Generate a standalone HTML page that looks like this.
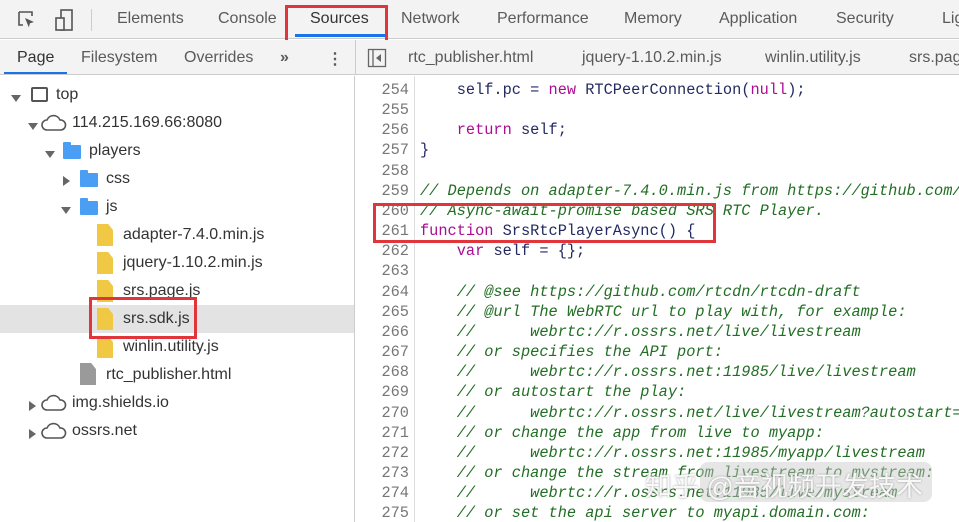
<!DOCTYPE html>
<html><head><meta charset="utf-8"><style>
*{margin:0;padding:0;box-sizing:border-box}
body{width:959px;height:522px;overflow:hidden;background:#fff;font-family:"Liberation Sans",sans-serif;position:relative;color:#333}
.abs{position:absolute;white-space:nowrap}
.tb{position:absolute;left:0;top:0;width:959px;height:39px;background:#f3f3f3;border-bottom:1px solid #ccc;overflow:hidden}
.tb span{position:absolute;top:10px;font-size:16px;color:#5a5a5a}
.row2{position:absolute;left:0;top:40px;width:959px;height:35px;background:#f3f3f3;border-bottom:1px solid #ccc;overflow:hidden}
.row2 span{position:absolute;top:9px;font-size:16px;color:#5a5a5a}
.left{position:absolute;left:0;top:76px;width:355px;height:446px;background:#fff;border-right:1px solid #ccc}
.t{position:absolute;font-size:16px;color:#333;white-space:nowrap}
.code{position:absolute;left:360px;top:80px;width:599px;height:442px;overflow:hidden;font-family:"Liberation Mono",monospace;font-size:15.3px;line-height:20.15px}
.ln{position:absolute;left:0;width:49px;text-align:right;color:#777}
.gut{position:absolute;left:414px;top:76px;width:1px;height:446px;background:#ddd}
.c{color:#236e25;font-style:italic}
.k{color:#aa0d91}
.n{color:#222a60}
.tri{display:inline-block;width:0;height:0;border-left:5px solid transparent;border-right:5px solid transparent;border-top:7px solid #666}
.trr{display:inline-block;width:0;height:0;border-top:5px solid transparent;border-bottom:5px solid transparent;border-left:7px solid #666}
.fold{position:absolute;width:18px;height:14px;background:#4a9ff5;border-radius:1px}
.fold:before{content:"";position:absolute;left:0;top:-3px;width:8px;height:4px;background:#4a9ff5;border-radius:1px 1px 0 0}
.file{position:absolute;width:16px;height:22px;background:#f0c844;clip-path:polygon(0 0,70% 0,100% 28%,100% 100%,0 100%)}
.red{position:absolute;border:3px solid #e0353b}
</style></head><body>
<div class="tb">
<svg class="abs" style="left:17px;top:10px" width="20" height="20" viewBox="0 0 20 20"><path d="M2 2h13v4M2 2v13h4" fill="none" stroke="#555" stroke-width="1.6"/><path d="M8 8l9 4-4 1.2-1.2 4z" fill="#555"/></svg>
<svg class="abs" style="left:54px;top:8px" width="20" height="24" viewBox="0 0 20 24"><rect x="7" y="2" width="11" height="20" fill="none" stroke="#555" stroke-width="1.6"/><rect x="2" y="10" width="8" height="12" fill="#f3f3f3" stroke="#555" stroke-width="1.6"/></svg>
<div class="abs" style="left:91px;top:9px;width:1px;height:22px;background:#ccc"></div>
<span style="left:117px">Elements</span>
<span style="left:218px">Console</span>
<span style="left:310px;color:#333">Sources</span>
<span style="left:401px">Network</span>
<span style="left:497px">Performance</span>
<span style="left:624px">Memory</span>
<span style="left:719px">Application</span>
<span style="left:836px">Security</span>
<span style="left:942px">Lig</span>
<div class="abs" style="left:295px;top:34px;width:90px;height:3px;background:#1a73e8"></div>
</div>
<div class="red" style="left:285px;top:5px;width:103px;height:39px"></div>
<div class="row2">
<span style="left:17px;color:#333">Page</span>
<span style="left:81px">Filesystem</span>
<span style="left:184px">Overrides</span>
<span style="left:280px;font-weight:bold">»</span>
<span style="left:327px;font-weight:bold">⋮</span>
<div class="abs" style="left:4px;top:32px;width:63px;height:3px;background:#1a73e8"></div>
<div class="abs" style="left:355px;top:0;width:1px;height:35px;background:#ccc"></div>
<svg class="abs" style="left:367px;top:8px" width="20" height="20" viewBox="0 0 20 20"><rect x="1.5" y="1.5" width="17" height="17" fill="none" stroke="#666" stroke-width="1.3"/><line x1="6" y1="2" x2="6" y2="18" stroke="#666" stroke-width="1.3"/><path d="M14 6v8l-5-4z" fill="#666"/></svg>
<span style="left:408px">rtc_publisher.html</span>
<span style="left:582px">jquery-1.10.2.min.js</span>
<span style="left:765px">winlin.utility.js</span>
<span style="left:909px">srs.pag</span>
</div>
<div class="left">
<div class="abs" style="left:0;top:229px;width:354px;height:28px;background:#e3e3e3"></div>
</div>
<!-- tree -->
<div class="abs" style="left:11px;top:89px"><span class="tri"></span></div>
<div class="abs" style="left:31px;top:87px;width:17px;height:15px;border:2px solid #555;border-radius:2px"></div>
<div class="t" style="left:56px;top:86px">top</div>
<div class="abs" style="left:28px;top:117px"><span class="tri"></span></div>
<svg class="abs" style="left:41px;top:114px" width="26" height="18" viewBox="0 0 26 18"><path d="M6 16a5 5 0 0 1 0-10a7 7 0 0 1 13 0a5 5 0 0 1 1 10z" fill="none" stroke="#555" stroke-width="1.6"/></svg>
<div class="t" style="left:72px;top:114px">114.215.169.66:8080</div>
<div class="abs" style="left:45px;top:145px"><span class="tri"></span></div>
<div class="fold" style="left:63px;top:145px"></div>
<div class="t" style="left:89px;top:142px">players</div>
<div class="abs" style="left:63px;top:173px"><span class="trr"></span></div>
<div class="fold" style="left:80px;top:173px"></div>
<div class="t" style="left:106px;top:170px">css</div>
<div class="abs" style="left:61px;top:201px"><span class="tri"></span></div>
<div class="fold" style="left:80px;top:201px"></div>
<div class="t" style="left:106px;top:198px">js</div>
<div class="file" style="left:97px;top:224px"></div><div class="t" style="left:123px;top:226px">adapter-7.4.0.min.js</div>
<div class="file" style="left:97px;top:252px"></div><div class="t" style="left:123px;top:254px">jquery-1.10.2.min.js</div>
<div class="file" style="left:97px;top:280px"></div><div class="t" style="left:123px;top:282px">srs.page.js</div>
<div class="file" style="left:97px;top:308px"></div><div class="t" style="left:123px;top:310px">srs.sdk.js</div>
<div class="file" style="left:97px;top:336px"></div><div class="t" style="left:123px;top:338px">winlin.utility.js</div>
<div class="abs" style="left:80px;top:363px;width:16px;height:22px;background:#9a9a9a;clip-path:polygon(0 0,70% 0,100% 28%,100% 100%,0 100%)"></div>
<div class="t" style="left:106px;top:366px">rtc_publisher.html</div>
<div class="abs" style="left:29px;top:398px"><span class="trr"></span></div>
<svg class="abs" style="left:41px;top:394px" width="26" height="18" viewBox="0 0 26 18"><path d="M6 16a5 5 0 0 1 0-10a7 7 0 0 1 13 0a5 5 0 0 1 1 10z" fill="none" stroke="#555" stroke-width="1.6"/></svg>
<div class="t" style="left:72px;top:394px">img.shields.io</div>
<div class="abs" style="left:29px;top:426px"><span class="trr"></span></div>
<svg class="abs" style="left:41px;top:422px" width="26" height="18" viewBox="0 0 26 18"><path d="M6 16a5 5 0 0 1 0-10a7 7 0 0 1 13 0a5 5 0 0 1 1 10z" fill="none" stroke="#555" stroke-width="1.6"/></svg>
<div class="t" style="left:72px;top:422px">ossrs.net</div>
<div class="red" style="left:89px;top:297px;width:108px;height:42px"></div>
<!-- code -->
<div class="gut"></div>
<div class="code">
<div class="ln" style="top:0">254<br>255<br>256<br>257<br>258<br>259<br>260<br>261<br>262<br>263<br>264<br>265<br>266<br>267<br>268<br>269<br>270<br>271<br>272<br>273<br>274<br>275</div>
<pre style="position:absolute;left:60px;top:0;font:inherit;line-height:inherit;white-space:pre"><span class="n">    self.pc = </span><span class="k">new</span><span class="n"> RTCPeerConnection(</span><span class="k">null</span><span class="n">);</span>

<span class="k">    return</span><span class="n"> self;</span>
<span class="n">}</span>

<span class="c">// Depends on adapter-7.4.0.min.js from https://github.com/</span>
<span class="c">// Async-await-promise based SRS RTC Player.</span>
<span class="k">function</span><span class="n"> SrsRtcPlayerAsync() {</span>
<span class="k">    var</span><span class="n"> self = {};</span>

<span class="c">    // @see https://github.com/rtcdn/rtcdn-draft</span>
<span class="c">    // @url The WebRTC url to play with, for example:</span>
<span class="c">    //      webrtc://r.ossrs.net/live/livestream</span>
<span class="c">    // or specifies the API port:</span>
<span class="c">    //      webrtc://r.ossrs.net:11985/live/livestream</span>
<span class="c">    // or autostart the play:</span>
<span class="c">    //      webrtc://r.ossrs.net/live/livestream?autostart=true</span>
<span class="c">    // or change the app from live to myapp:</span>
<span class="c">    //      webrtc://r.ossrs.net:11985/myapp/livestream</span>
<span class="c">    // or change the stream from livestream to mystream:</span>
<span class="c">    //      webrtc://r.ossrs.net:11985/live/mystream</span>
<span class="c">    // or set the api server to myapi.domain.com:</span></pre>
</div>
<div class="red" style="left:373px;top:203px;width:343px;height:40px"></div>
<div class="abs" style="left:700px;top:462px;width:232px;height:40px;background:rgba(200,200,200,0.45);border-radius:8px"></div>
<div class="abs" style="left:645px;top:465px;font-family:'Liberation Sans','Noto Sans CJK SC',sans-serif;font-size:27px;color:rgba(255,255,255,0.9);text-shadow:0 0 2px #999">知乎 @音视频开发技术</div>
</body></html>
